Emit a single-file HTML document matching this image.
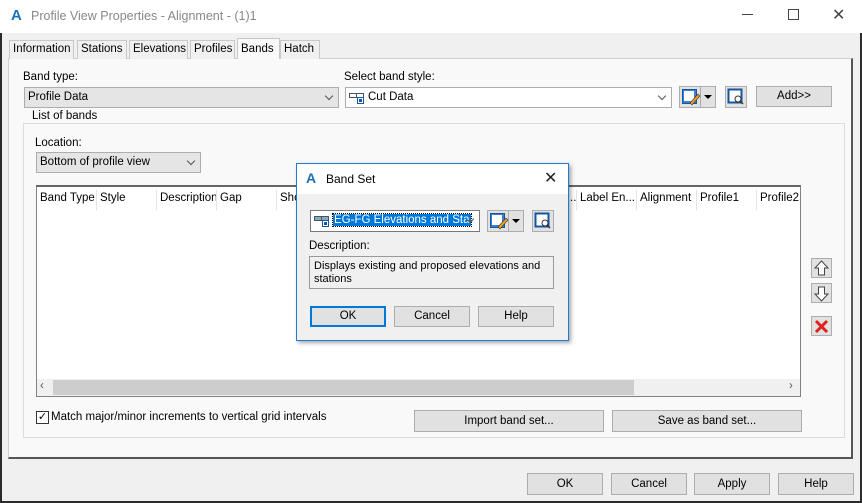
<!DOCTYPE html>
<html><head><style>
*{box-sizing:border-box;margin:0;padding:0}
body{width:862px;height:503px;overflow:hidden;background:#f0f0f0;font-family:"Liberation Sans",sans-serif;font-size:11.5px;color:#000;position:relative}
.a{position:absolute;white-space:nowrap}
.btn{position:absolute;background:#e1e1e1;border:1px solid #adadad;text-align:center;font-size:11.5px;line-height:19px}
.combo{position:absolute;border:1px solid #adadad;line-height:19px;padding-left:3px;white-space:nowrap;overflow:hidden}
.chev{position:absolute;right:6px;top:5px;width:6px;height:6px;border-right:1px solid #555;border-bottom:1px solid #555;transform:rotate(45deg)}
.tab{position:absolute;top:40px;height:19px;border:1px solid #c8c8c8;border-bottom:none;background:#f0f0f0;padding-left:3px;line-height:17px;white-space:nowrap}
.hd{position:absolute;top:190px;line-height:16px;border-right:1px solid #e5e5e5;height:20px;padding-left:3px;white-space:nowrap;overflow:hidden}
</style></head><body>
<div class="a" style="left:0;top:0;width:862px;height:503px;border:2px solid #2b2b2b;border-top:none"></div>
<div class="a" style="left:0;top:0;width:862px;height:33px;background:#fff"></div>
<div class="a" style="left:11px;top:7px;font-weight:bold;font-size:15px;color:#1d6fb8">A</div>
<div class="a" style="left:31px;top:9px;font-size:12.5px;color:#888">Profile View Properties - Alignment - (1)1</div>
<div class="a" style="left:742px;top:14px;width:11px;height:1px;background:#444"></div>
<div class="a" style="left:788px;top:9px;width:11px;height:11px;border:1px solid #444"></div>
<div class="a" style="left:832px;top:5px;font-size:16px;color:#444">✕</div>
<div class="a" style="left:8px;top:58px;width:845px;height:401px;background:#f9f9f9;border:1px solid #d0d0d0;border-right:2px solid #555;border-bottom:2px solid #555"></div>
<div class="tab" style="left:9px;width:65px">Information</div>
<div class="tab" style="left:77px;width:50px">Stations</div>
<div class="tab" style="left:129px;width:59px">Elevations</div>
<div class="tab" style="left:190px;width:45px">Profiles</div>
<div class="tab" style="left:237px;top:38px;height:21px;width:43px;background:#f9f9f9;line-height:21px">Bands</div>
<div class="tab" style="left:280px;width:40px">Hatch</div>
<div class="a" style="left:23px;top:71px">Band type:</div>
<div class="combo" style="left:24px;top:87px;width:315px;height:21px;background:#e5e5e5">Profile Data<div class="chev"></div></div>
<div class="a" style="left:344px;top:71px">Select band style:</div>
<div class="combo" style="left:345px;top:87px;width:327px;height:21px;background:#fff;padding-left:22px"><svg class="a" style="left:3px;top:4px" width="17" height="12"><rect x="0.5" y="1.5" width="7" height="4" fill="#fff" stroke="#456"/><rect x="7.5" y="1.5" width="7" height="4" fill="#fff" stroke="#456"/><rect x="8.5" y="5.5" width="6" height="6" fill="#fff" stroke="#1456a0"/><rect x="10" y="7" width="3" height="3" fill="#1456a0"/></svg>Cut Data<div class="chev"></div></div>
<div class="btn" style="left:679px;top:86px;width:37px;height:22px"></div>
<div class="a" style="left:700px;top:87px;width:1px;height:20px;background:#adadad"></div>
<svg class="a" style="left:681px;top:88px" width="34" height="18"><rect x="1.5" y="1.5" width="14" height="14" fill="#3b7fd4" stroke="#1456a0"/><rect x="3" y="3" width="10" height="10" fill="#fff"/><path d="M9 15 L17 6 L19 8 L11 17 Z" fill="#f0a020" stroke="#333" stroke-width=".6"/><path d="M23 7 h8 l-4 4z" fill="#000"/></svg>
<div class="btn" style="left:725px;top:86px;width:22px;height:22px"></div>
<svg class="a" style="left:727px;top:88px" width="18" height="18"><rect x="1.5" y="1.5" width="13" height="13" fill="#fff" stroke="#1456a0" stroke-width="2"/><circle cx="11" cy="11" r="3" fill="#fff" stroke="#333"/><path d="M13 13l3 3" stroke="#333" stroke-width="1.5"/></svg>
<div class="btn" style="left:756px;top:86px;width:76px;height:21px">Add&gt;&gt;</div>
<div class="a" style="left:23px;top:123px;width:822px;height:315px;border:1px solid #dcdcdc"></div>
<div class="a" style="left:30px;top:110px;background:#f9f9f9;padding:0 2px">List of bands</div>
<div class="a" style="left:35px;top:137px">Location:</div>
<div class="combo" style="left:36px;top:152px;width:165px;height:21px;background:#e5e5e5">Bottom of profile view<div class="chev"></div></div>
<div class="a" style="left:36px;top:185px;width:765px;height:212px;background:#fff;border:1px solid #828282;border-top:2px solid #666"></div>
<div class="hd" style="left:37px;width:60px">Band Type</div>
<div class="hd" style="left:97px;width:60px">Style</div>
<div class="hd" style="left:157px;width:60px">Description</div>
<div class="hd" style="left:217px;width:60px">Gap</div>
<div class="hd" style="left:277px;width:20px">Sho</div>
<div class="hd" style="left:567px;width:10px">..</div>
<div class="hd" style="left:577px;width:60px">Label En...</div>
<div class="hd" style="left:637px;width:60px">Alignment</div>
<div class="hd" style="left:697px;width:60px">Profile1</div>
<div class="hd" style="left:757px;width:43px;border:none">Profile2</div>
<div class="a" style="left:37px;top:379px;width:763px;height:17px;background:#f0f0f0"></div>
<div class="a" style="left:53px;top:380px;width:581px;height:15px;background:#cdcdcd"></div>
<div class="a" style="left:40px;top:380px;color:#555">‹</div>
<div class="a" style="left:789px;top:380px;color:#555">›</div>
<div class="btn" style="left:811px;top:258px;width:21px;height:20px"></div>
<svg class="a" style="left:813px;top:260px" width="17" height="17"><path d="M8.5 1 L15 8 H11.5 V15 H5.5 V8 H2 Z" fill="#fff" stroke="#444"/></svg>
<div class="btn" style="left:811px;top:283px;width:21px;height:20px"></div>
<svg class="a" style="left:813px;top:285px" width="17" height="17"><path d="M8.5 16 L15 9 H11.5 V2 H5.5 V9 H2 Z" fill="#fff" stroke="#444"/></svg>
<div class="btn" style="left:811px;top:316px;width:21px;height:20px"></div>
<svg class="a" style="left:813px;top:318px" width="17" height="17"><path d="M3 3L14 14M14 3L3 14" stroke="#e02020" stroke-width="3"/></svg>
<div class="a" style="left:36px;top:411px;width:13px;height:13px;border:1px solid #333;background:#fff;font-size:11px;line-height:11px;text-align:center">✓</div>
<div class="a" style="left:51px;top:411px">Match major/minor increments to vertical grid intervals</div>
<div class="btn" style="left:414px;top:410px;width:190px;height:22px;line-height:20px">Import band set...</div>
<div class="btn" style="left:612px;top:410px;width:190px;height:22px;line-height:20px">Save as band set...</div>
<div class="btn" style="left:527px;top:473px;width:76px;height:22px;line-height:20px">OK</div>
<div class="btn" style="left:611px;top:473px;width:76px;height:22px;line-height:20px">Cancel</div>
<div class="btn" style="left:694px;top:473px;width:76px;height:22px;line-height:20px">Apply</div>
<div class="btn" style="left:778px;top:473px;width:76px;height:22px;line-height:20px">Help</div>
<div class="a" style="left:296px;top:163px;width:273px;height:178px;background:#f0f0f0;border:1px solid #1e7ad6;box-shadow:2px 2px 4px rgba(0,0,0,.35)"></div>
<div class="a" style="left:297px;top:164px;width:271px;height:30px;background:#fff"></div>
<div class="a" style="left:306px;top:170px;font-weight:bold;font-size:14px;color:#1d6fb8">A</div>
<div class="a" style="left:326px;top:172px;font-size:12px">Band Set</div>
<div class="a" style="left:544px;top:168px;font-size:16px;color:#222">✕</div>
<div class="combo" style="left:310px;top:210px;width:170px;height:22px;background:#fff;border-color:#7a7a7a;padding-left:22px"><svg class="a" style="left:3px;top:4px" width="17" height="13"><rect x="0.5" y="1.5" width="7" height="4" fill="#8ab" stroke="#456"/><rect x="7.5" y="1.5" width="7" height="4" fill="#8ab" stroke="#456"/><rect x="8.5" y="5.5" width="6" height="6" fill="#fff" stroke="#1456a0"/><rect x="10" y="7" width="3" height="3" fill="#1456a0"/></svg><span style="background:#0078d7;color:#fff;padding:0 1px;outline:1px dotted #000">EG-FG Elevations and Sta</span><div class="chev"></div></div>
<div class="btn" style="left:487px;top:210px;width:37px;height:22px"></div>
<div class="a" style="left:508px;top:211px;width:1px;height:20px;background:#adadad"></div>
<svg class="a" style="left:489px;top:212px" width="34" height="18"><rect x="1.5" y="1.5" width="14" height="14" fill="#3b7fd4" stroke="#1456a0"/><rect x="3" y="3" width="10" height="10" fill="#fff"/><path d="M9 15 L17 6 L19 8 L11 17 Z" fill="#f0a020" stroke="#333" stroke-width=".6"/><path d="M23 7 h8 l-4 4z" fill="#000"/></svg>
<div class="btn" style="left:532px;top:210px;width:22px;height:22px"></div>
<svg class="a" style="left:534px;top:212px" width="18" height="18"><rect x="1.5" y="1.5" width="13" height="13" fill="#fff" stroke="#1456a0" stroke-width="2"/><circle cx="11" cy="11" r="3" fill="#fff" stroke="#333"/><path d="M13 13l3 3" stroke="#333" stroke-width="1.5"/></svg>
<div class="a" style="left:309px;top:240px">Description:</div>
<div class="a" style="left:309px;top:256px;width:245px;height:33px;border:1px solid #999;background:#f0f0f0;padding:3px 4px;line-height:13px;font-size:11px;white-space:normal">Displays existing and proposed elevations and stations</div>
<div class="btn" style="left:310px;top:306px;width:76px;height:21px;border:2px solid #0078d7;line-height:17px">OK</div>
<div class="btn" style="left:394px;top:306px;width:76px;height:21px">Cancel</div>
<div class="btn" style="left:478px;top:306px;width:76px;height:21px">Help</div>
</body></html>
